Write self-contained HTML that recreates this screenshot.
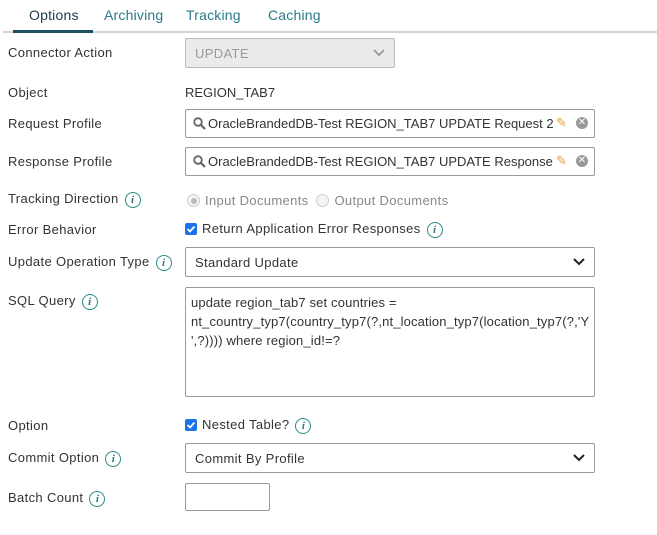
<!DOCTYPE html>
<html><head><style>
body{margin:0;width:657px;height:535px;background:#fff;font-family:"Liberation Sans",sans-serif;font-size:13px;color:#333;position:relative;overflow:hidden}
.a{position:absolute;white-space:nowrap}
.l{letter-spacing:0.35px}
.tab{position:absolute;top:7px;font-size:14px;color:#2a7a8a;letter-spacing:0.2px}
.box{position:absolute;border:1px solid #9a9a9a;border-radius:2px;background:#fff;box-sizing:border-box}
.i{display:inline-block;width:14px;height:14px;border:1.3px solid #2a8a8a;border-radius:50%;color:#2a7a7a;font:italic bold 11px "Liberation Serif",serif;text-align:center;line-height:14px;vertical-align:middle;margin-left:6px;letter-spacing:0}
.chev{position:absolute;right:8px;top:8px}
.cb{display:inline-block;width:12px;height:12px;background:#1a73e8;border-radius:2px;vertical-align:-2px;margin-right:5px;position:relative}
.rad{display:inline-block;width:11px;height:11px;border:1px solid #ccc;border-radius:50%;vertical-align:-2px;margin-right:5px;position:relative;background:#f4f4f4}
</style></head><body>
<div class="tab" style="left:29px;color:#1d3b48">Options</div>
<div class="tab" style="left:104px">Archiving</div>
<div class="tab" style="left:186px">Tracking</div>
<div class="tab" style="left:268px">Caching</div>
<div class="a" style="left:3px;top:31px;width:654px;height:2px;background:#d4d4d4"></div>
<div class="a" style="left:13px;top:30px;width:80px;height:3px;background:#1d4e63"></div>

<div class="a l" style="left:8px;top:45px">Connector Action</div>
<div class="box" style="left:185px;top:38px;width:210px;height:30px;background:#ebebeb;border-color:#bbb"><span class="a l" style="left:9px;top:7px;color:#999">UPDATE</span>
<svg class="chev" width="14" height="10" viewBox="0 0 14 10"><path d="M2 3l5 5 5-5" stroke="#999" stroke-width="1.8" fill="none"/></svg></div>

<div class="a l" style="left:8px;top:85px">Object</div>
<div class="a" style="left:185px;top:85px">REGION_TAB7</div>

<div class="a l" style="left:8px;top:116px">Request Profile</div>
<div class="box" style="left:185px;top:109px;width:410px;height:29px;overflow:hidden">
<svg class="a" style="left:7px;top:7px" width="13" height="13" viewBox="0 0 13 13"><circle cx="5" cy="5" r="3.8" stroke="#666" stroke-width="1.8" fill="none"/><path d="M8 8l4 4" stroke="#666" stroke-width="2.2"/></svg>
<span class="a" style="left:22px;top:6px;width:345px;overflow:hidden">OracleBrandedDB-Test REGION_TAB7 UPDATE Request 2</span>
<span class="a" style="left:370px;top:5px;color:#e8a33a">✎</span>
<span class="a" style="left:390px;top:7px;width:12px;height:12px;border-radius:50%;background:#999;color:#fff;font-size:10px;line-height:12px;text-align:center">✕</span></div>

<div class="a l" style="left:8px;top:154px">Response Profile</div>
<div class="box" style="left:185px;top:147px;width:410px;height:29px;overflow:hidden">
<svg class="a" style="left:7px;top:7px" width="13" height="13" viewBox="0 0 13 13"><circle cx="5" cy="5" r="3.8" stroke="#666" stroke-width="1.8" fill="none"/><path d="M8 8l4 4" stroke="#666" stroke-width="2.2"/></svg>
<span class="a" style="left:22px;top:6px;width:345px;overflow:hidden">OracleBrandedDB-Test REGION_TAB7 UPDATE Response</span>
<span class="a" style="left:370px;top:5px;color:#e8a33a">✎</span>
<span class="a" style="left:390px;top:7px;width:12px;height:12px;border-radius:50%;background:#999;color:#fff;font-size:10px;line-height:12px;text-align:center">✕</span></div>

<div class="a l" style="left:8px;top:191px">Tracking Direction<span class="i">i</span></div>
<div class="a l" style="left:187px;top:193px;color:#888"><span class="rad"><span style="position:absolute;left:2.5px;top:2.5px;width:6px;height:6px;border-radius:50%;background:#bbb"></span></span>Input Documents &nbsp;<span class="rad"></span>Output Documents</div>

<div class="a l" style="left:8px;top:222px">Error Behavior</div>
<div class="a l" style="left:185px;top:221px"><span class="cb"><svg width="12" height="12" style="position:absolute;left:0;top:0"><path d="M2.5 6l2.5 2.5 4.5-5" stroke="#fff" stroke-width="1.8" fill="none"/></svg></span>Return Application Error Responses<span class="i">i</span></div>

<div class="a l" style="left:8px;top:254px">Update Operation Type<span class="i">i</span></div>
<div class="box" style="left:185px;top:247px;width:410px;height:30px"><span class="a l" style="left:9px;top:7px">Standard Update</span>
<svg class="chev" width="14" height="10" viewBox="0 0 14 10"><path d="M2 3l5 5 5-5" stroke="#222" stroke-width="2" fill="none"/></svg></div>

<div class="a l" style="left:8px;top:293px">SQL Query<span class="i">i</span></div>
<div class="box l" style="left:185px;top:287px;width:410px;height:110px;padding:5px 5px;line-height:19px;white-space:pre;overflow:hidden;letter-spacing:0.15px">update region_tab7 set countries =
nt_country_typ7(country_typ7(?,nt_location_typ7(location_typ7(?,'Y
',?)))) where region_id!=?</div>

<div class="a l" style="left:8px;top:418px">Option</div>
<div class="a l" style="left:185px;top:417px"><span class="cb"><svg width="12" height="12" style="position:absolute;left:0;top:0"><path d="M2.5 6l2.5 2.5 4.5-5" stroke="#fff" stroke-width="1.8" fill="none"/></svg></span>Nested Table?<span class="i">i</span></div>

<div class="a l" style="left:8px;top:450px">Commit Option<span class="i">i</span></div>
<div class="box" style="left:185px;top:443px;width:410px;height:30px"><span class="a l" style="left:9px;top:7px">Commit By Profile</span>
<svg class="chev" width="14" height="10" viewBox="0 0 14 10"><path d="M2 3l5 5 5-5" stroke="#222" stroke-width="2" fill="none"/></svg></div>

<div class="a l" style="left:8px;top:490px">Batch Count<span class="i">i</span></div>
<div class="box" style="left:185px;top:483px;width:85px;height:28px"></div>
</body></html>
